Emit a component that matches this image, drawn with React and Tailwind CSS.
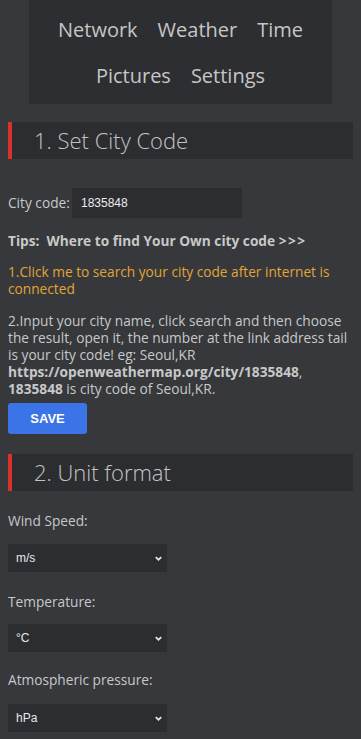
import React from "react";

const sans = { fontFamily: '"Open Sans", "Noto Sans", sans-serif' };

function Header({ children }) {
  return (
    <div className="flex h-[37px] items-stretch">
      <div className="w-[4px] bg-[#d8322a]" />
      <div className="flex flex-1 items-center bg-[#2c2d31] pl-[22px] text-[22px] font-light text-[#c4c4c4]">
        {children}
      </div>
    </div>
  );
}

function Select({ value }) {
  return (
    <div className="flex h-[28px] w-[159px] items-center justify-between bg-[#2c2d31] pl-[8px] pr-[4px] text-[12px] text-[#e8e8e8] [font-family:'Liberation_Sans',Arial,sans-serif]">
      <span>{value}</span>
      <svg width="9" height="9" viewBox="0 0 10 10">
        <path d="M2 3.5 L5 6.5 L8 3.5" fill="none" stroke="#e8e8e8" strokeWidth="2" />
      </svg>
    </div>
  );
}

export default function App() {
  return (
    <div className="min-h-[739px] bg-[#36383c] px-[8px] pb-[6px]" style={sans}>
      <nav className="mx-auto flex h-[104px] w-[303px] flex-wrap content-start justify-center gap-x-[20px] bg-[#2d2e32] pt-[7px] text-[20px] text-[#c6c6c6]">
        <span className="leading-[46px]">Network</span>
        <span className="leading-[46px]">Weather</span>
        <span className="leading-[46px]">Time</span>
        <span className="leading-[46px]">Pictures</span>
        <span className="leading-[46px]">Settings</span>
      </nav>

      <div className="mt-[18px]">
        <Header>1. Set City Code</Header>
      </div>

      <div className="mt-[29px] flex items-center text-[13.7px] text-[#c8c8c8]">
        <span className="w-[64px]">City code:</span>
        <div className="flex h-[30px] w-[170px] items-center bg-[#2c2d31] pl-[9px] text-[12px] text-[#ececec] [font-family:'Liberation_Sans',Arial,sans-serif]">
          1835848
        </div>
      </div>

      <p className="mt-[14px] text-[13.7px] font-bold leading-[17px] text-[#c8c8c8]">
        Tips:&nbsp; Where to find Your Own city code <span className="tracking-[1.5px]">&gt;&gt;&gt;</span>
      </p>

      <p className="mt-[14px] text-[13.7px] leading-[17px] text-[#e2a437]">
        1.Click me to search your city code after internet is connected
      </p>

      <p className="mt-[15px] text-[13.7px] leading-[17px] text-[#c8c8c8]">
        2.Input your city name, click search and then choose the result, open it, the number at the link address tail is your city code! eg: Seoul,KR{" "}
        <b>https://openweathermap.org/city/1835848</b>, <b>1835848</b> is city code of Seoul,KR.
      </p>

      <button className="mt-[6px] flex h-[31px] w-[79px] items-center justify-center rounded-[3px] bg-[#3b74e6] text-[13px] font-bold text-white [font-family:'Liberation_Sans',Arial,sans-serif]">
        SAVE
      </button>

      <div className="mt-[20px]">
        <Header>2. Unit format</Header>
      </div>

      <div className="mt-[21px] text-[13.7px] leading-[17px] text-[#c8c8c8]">Wind Speed:</div>
      <div className="mt-[15px]">
        <Select value="m/s" />
      </div>

      <div className="mt-[21px] text-[13.7px] leading-[17px] text-[#c8c8c8]">Temperature:</div>
      <div className="mt-[14px]">
        <Select value="°C" />
      </div>

      <div className="mt-[19px] text-[13.7px] leading-[17px] text-[#c8c8c8]">Atmospheric pressure:</div>
      <div className="mt-[16px]">
        <Select value="hPa" />
      </div>
    </div>
  );
}
